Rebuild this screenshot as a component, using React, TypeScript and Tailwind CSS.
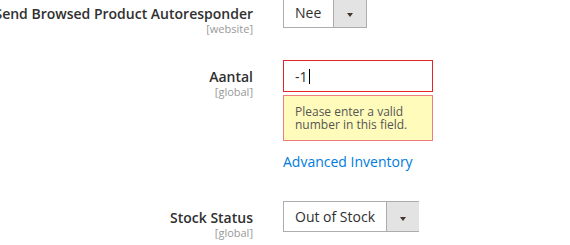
import React from 'react';

function Arrow() {
  return (
    <svg width="6" height="4" viewBox="0 0 6 4" className="mt-[15px]">
      <polygon points="0,0 6,0 3,4" fill="#41362f" />
    </svg>
  );
}

function FakeSelect({ value, width }: { value: string; width: string }) {
  return (
    <div className={`flex h-[31px] border border-[#adadad] bg-white ${width}`}>
      <div className="flex-1 px-[11px] text-[14px] leading-[29px] text-[#303030] whitespace-nowrap">{value}</div>
      <div className="w-[33px] shrink-0 bg-[#e3e3e3] border-l border-[#adadad] flex justify-center">
        <Arrow />
      </div>
    </div>
  );
}

function FieldLabel({ label, scope }: { label: string; scope: string }) {
  return (
    <div className="w-[253px] shrink-0 flex flex-col items-end pt-[8px] whitespace-nowrap">
      <div className="text-[14px] font-semibold leading-[18px] text-[#303030]">{label}</div>
      <div className="text-[11px] leading-[12px] text-[#999]">{scope}</div>
    </div>
  );
}

export default function App() {
  return (
    <div className="w-[570px] h-[245px] overflow-hidden bg-white font-['Open_Sans',sans-serif] text-[#303030]">
      {/* Send Browsed Product Autoresponder */}
      <div className="flex items-start mt-[-3px]">
        <FieldLabel label="Send Browsed Product Autoresponder" scope="[website]" />
        <div className="ml-[30px]">
          <FakeSelect value="Nee" width="w-[84px]" />
        </div>
      </div>

      {/* Aantal */}
      <div className="flex items-start mt-[25px]">
        <FieldLabel label="Aantal" scope="[global]" />
        <div className="ml-[30px] flex flex-col">
          <div className="w-[150px] h-[32px] border border-[#e22626] bg-white flex items-center px-[11px]">
            <span className="text-[14px] leading-[19px] text-[#303030]">-1</span>
            <span className="ml-[1px] w-[1px] h-[15px] bg-[#000]" />
          </div>
          <div className="mt-[3px] w-[150px] bg-[#fffbbb] border border-[#ee7d7d] px-[11px] pt-[9px] pb-[9px] text-[12px] leading-[13px] text-[#555]">
            Please enter a valid number in this field.
          </div>
          <a className="mt-[11px] text-[14px] leading-[19px] text-[#007bdb] whitespace-nowrap">Advanced Inventory</a>
        </div>
      </div>

      {/* Stock Status */}
      <div className="flex items-start mt-[30px]">
        <FieldLabel label="Stock Status" scope="[global]" />
        <div className="ml-[30px]">
          <FakeSelect value="Out of Stock" width="w-[136px]" />
        </div>
      </div>
    </div>
  );
}
